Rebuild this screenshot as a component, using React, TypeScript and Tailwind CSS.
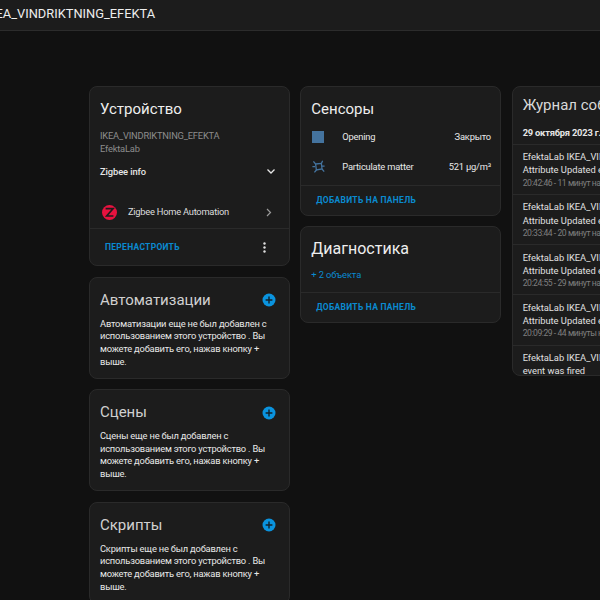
import React from "react";

function Card({ children, className = "" }: { children: React.ReactNode; className?: string }) {
  return (
    <div className={`rounded-[8px] border border-[#2a2a2a] bg-[#1c1c1c] ${className}`}>{children}</div>
  );
}

function Plus() {
  return (
    <svg width="14" height="14" viewBox="0 0 14 14" className="shrink-0">
      <circle cx="7" cy="7" r="6.5" fill="#0a93de" />
      <path d="M7 3.6v6.8M3.6 7h6.8" stroke="#12222c" strokeWidth="1.4" />
    </svg>
  );
}

function EmptyCard({ title, text }: { title: string; text: string }) {
  return (
    <Card className="h-[102px] pl-[10px] pr-[13px] pt-[13px]">
      <div className="flex items-center justify-between">
        <div className="text-[15px] leading-[19px] text-[#d0d0d0]">{title}</div>
        <Plus />
      </div>
      <p className="mt-[8px] text-[9.33px] leading-[12.7px] tracking-[-0.2px] text-[#e8e8e8]">{text}</p>
    </Card>
  );
}

function Action({ children }: { children: React.ReactNode }) {
  return (
    <div className="text-[8.5px] font-bold leading-[11px] tracking-[0.27px] text-[#0a8ad0]">{children}</div>
  );
}

function SensorRow({ icon, name, value }: { icon: React.ReactNode; name: string; value: string }) {
  return (
    <div className="flex h-[30px] items-center pl-[11px] pr-[9px] text-[9.33px] tracking-[-0.2px] text-[#e8e8e8]">
      <div className="w-[30px] shrink-0">{icon}</div>
      <div className="flex-1">{name}</div>
      <div>{value}</div>
    </div>
  );
}

function LogEntry({ time, last }: { time?: string; last?: boolean }) {
  return (
    <div className={`border-t border-[#2a2a2a] pl-[10px] pt-[5.5px] text-[9.33px] leading-[13.3px] text-[#e0e0e0] ${last ? "" : "h-[50.3px]"}`}>
      <div className="whitespace-nowrap">EfektaLab IKEA_VINDRIKTNING_EFEKTA</div>
      {last ? (
        <div className="whitespace-nowrap">event was fired</div>
      ) : (
        <>
          <div className="whitespace-nowrap">Attribute Updated event was fired</div>
          <div className="whitespace-nowrap text-[8.6px] tracking-[-0.45px] text-[#7f7f7f]">{time}</div>
        </>
      )}
    </div>
  );
}

export default function App() {
  return (
    <div className="h-[600px] w-[600px] overflow-hidden bg-[#111111]">
      <div className="[font-family:Roboto,'Noto_Sans',sans-serif]">
        <header className="flex h-[31px] items-center overflow-hidden border-b border-[#2c2c2c] bg-[#1c1c1c] pb-[2px]">
          <div className="ml-[-16px] whitespace-nowrap text-[12.85px] text-[#eeeeee]">IKEA_VINDRIKTNING_EFEKTA</div>
        </header>
        <main className="flex items-start gap-[10.67px] pl-[89px] pt-[54.5px]">
          <div className="flex w-[200.67px] shrink-0 flex-col gap-[10.5px]">
            <Card className="h-[180.5px]">
              <div className="px-[10px] pt-[13px]">
                <div className="text-[15px] leading-[19px] text-[#eeeeee]">Устройство</div>
                <div className="mt-[10px] text-[9.33px] leading-[13px] tracking-[-0.2px] text-[#8c8c8c]">
                  <div>IKEA_VINDRIKTNING_EFEKTA</div>
                  <div>EfektaLab</div>
                </div>
                <div className="mt-[10px] flex items-center justify-between">
                  <div className="text-[9.33px] font-medium leading-[13px] tracking-[-0.1px] text-[#e6e6e6]">Zigbee info</div>
                  <svg width="10" height="7" viewBox="0 0 10 7" className="mr-[3px]">
                    <path d="M1.5 1.5 5 5l3.5-3.5" fill="none" stroke="#e6e6e6" strokeWidth="1.3" />
                  </svg>
                </div>
              </div>
              <div className="mt-[19px] flex h-[31px] items-center pl-[12px] pr-[17px]">
                <svg width="15" height="15" viewBox="0 0 15 15" className="shrink-0">
                  <circle cx="7.5" cy="7.5" r="7.5" fill="#e8123f" />
                  <path d="M3.6 3.6h7.6L4.6 11h6.8" fill="none" stroke="#1c1c1c" strokeWidth="1.6" />
                </svg>
                <div className="ml-[11px] flex-1 text-[9.33px] tracking-[-0.25px] text-[#dcdcdc]">Zigbee Home Automation</div>
                <svg width="6" height="9" viewBox="0 0 6 9">
                  <path d="M1 1l3.5 3.5L1 8" fill="none" stroke="#9a9a9a" strokeWidth="1.2" />
                </svg>
              </div>
              <div className="flex h-[37px] items-center justify-between border-t border-[#2a2a2a] pl-[15px] pr-[23px] pt-[1px]">
                <Action>ПЕРЕНАСТРОИТЬ</Action>
                <svg width="3" height="11" viewBox="0 0 3 11">
                  <circle cx="1.5" cy="1.5" r="1.2" fill="#e0e0e0" />
                  <circle cx="1.5" cy="5.5" r="1.2" fill="#e0e0e0" />
                  <circle cx="1.5" cy="9.5" r="1.2" fill="#e0e0e0" />
                </svg>
              </div>
            </Card>
            <EmptyCard title="Автоматизации" text="Автоматизации еще не был добавлен с использованием этого устройство . Вы можете добавить его, нажав кнопку + выше." />
            <EmptyCard title="Сцены" text="Сцены еще не был добавлен с использованием этого устройство . Вы можете добавить его, нажав кнопку + выше." />
            <EmptyCard title="Скрипты" text="Скрипты еще не был добавлен с использованием этого устройство . Вы можете добавить его, нажав кнопку + выше." />
          </div>

          <div className="flex w-[200.67px] shrink-0 flex-col gap-[10.5px]">
            <Card className="h-[130px]">
              <div className="px-[10px] pt-[13px] text-[15px] leading-[19px] text-[#eeeeee]">Сенсоры</div>
              <div className="mt-[3px]">
                <SensorRow
                  name="Opening"
                  value="Закрыто"
                  icon={<div className="h-[12px] w-[12px] bg-[#44739e]" />}
                />
                <SensorRow
                  name="Particulate matter"
                  value="521 µg/m³"
                  icon={
                    <svg width="13" height="13" viewBox="0 0 13 13" className="block">
                      <g fill="none" stroke="#44739e" strokeWidth="1.3">
                        <path d="M3.6 4 9.4 3.4 10 9l-5.6 1z" />
                        <path d="M3.6 4 1.4 1.4M9.4 3.4 10.6.8M10 9l2.2 2.6M4.4 10l-2 2.4M.4 6.6h2.6M10 6.2h2.6" />
                      </g>
                    </svg>
                  }
                />
              </div>
              <div className="mt-[3px] flex h-[30px] items-center border-t border-[#2a2a2a] pl-[15px]">
                <Action>ДОБАВИТЬ НА ПАНЕЛЬ</Action>
              </div>
            </Card>
            <Card className="h-[97px]">
              <div className="px-[10px] pt-[12px] text-[16px] leading-[19px] text-[#eeeeee]">Диагностика</div>
              <div className="mt-[10px] px-[10px] text-[9.33px] leading-[13px] tracking-[-0.1px] text-[#0a8ad0]">+ 2 объекта</div>
              <div className="mt-[11px] flex h-[29px] items-center border-t border-[#2a2a2a] pl-[15px]">
                <Action>ДОБАВИТЬ НА ПАНЕЛЬ</Action>
              </div>
            </Card>
          </div>

          <Card className="h-[290px] w-[200px] shrink-0 overflow-hidden">
            <div className="px-[10px] pt-[9px] text-[15px] leading-[19px] text-[#d8d8d8]">Журнал событий</div>
            <div className="mt-[11px] h-[18px] pl-[10px] text-[9.33px] font-bold leading-[13px] tracking-[-0.2px] text-[#e6e6e6]">29 октября 2023 г.</div>
            <div>
              <LogEntry time="20:42:46 - 11 минут назад" />
              <LogEntry time="20:33:44 - 20 минут назад" />
              <LogEntry time="20:24:55 - 29 минут назад" />
              <LogEntry time="20:09:29 - 44 минуты назад" />
              <LogEntry last />
            </div>
          </Card>
        </main>
      </div>
    </div>
  );
}
